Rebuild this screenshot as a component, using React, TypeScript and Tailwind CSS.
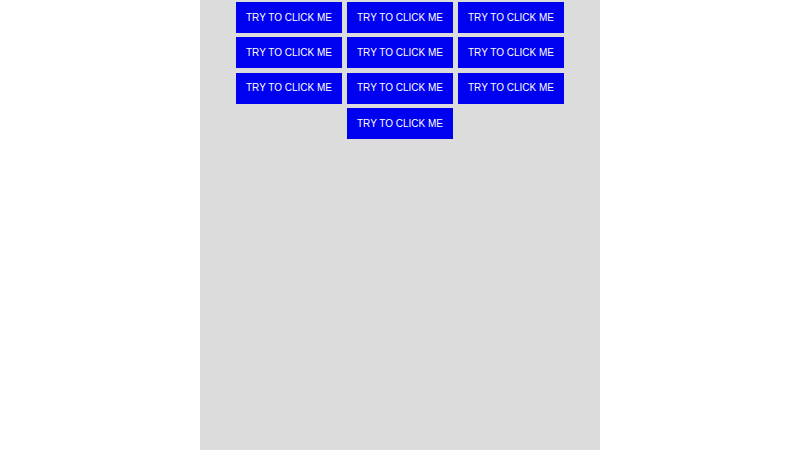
export default function App() {
  const items = Array.from({ length: 10 });
  return (
    <div className="w-full h-[450px] bg-white">
      <div className="mx-auto w-[400px] h-[450px] bg-[#dcdcdc] pt-[2px]">
        <div className="flex flex-wrap justify-center gap-x-[5px] gap-y-[4.4px] px-[36px]">
          {items.map((_, i) => (
            <button
              key={i}
              className="w-[106px] h-[31px] bg-[#0000f0] text-white text-[10px] leading-none flex items-center justify-center"
              style={{ fontFamily: '"Liberation Sans", Arial, sans-serif' }}
            >
              TRY TO CLICK ME
            </button>
          ))}
        </div>
      </div>
    </div>
  );
}
